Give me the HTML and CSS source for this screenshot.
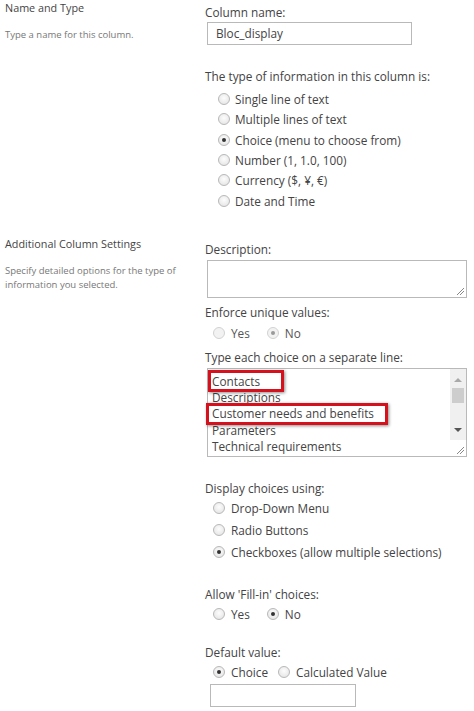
FILE: index.html
```html
<!DOCTYPE html>
<html>
<head>
<meta charset="utf-8">
<link rel="stylesheet" href="styles.css">
</head>
<body>
<div class="page">
  <section class="sec sec1">
    <div class="side">
      <div class="side-title">Name and Type</div>
      <div class="side-desc">Type a name for this column.</div>
    </div>
    <div class="main">
      <div class="lbl l-colname">Column name:</div>
      <div class="textbox tb-name">Bloc_display</div>
      <div class="lbl l-type">The type of information in this column is:</div>
      <div class="typelist">
        <div class="opt"><span class="radio"></span>Single line of text</div>
        <div class="opt"><span class="radio"></span>Multiple lines of text</div>
        <div class="opt"><span class="radio on"></span>Choice (menu to choose from)</div>
        <div class="opt"><span class="radio"></span>Number (1, 1.0, 100)</div>
        <div class="opt"><span class="radio"></span>Currency ($, ¥, €)</div>
        <div class="opt"><span class="radio"></span>Date and Time</div>
      </div>
    </div>
  </section>
  <section class="sec sec2">
    <div class="side">
      <div class="side-title">Additional Column Settings</div>
      <div class="side-desc">Specify detailed options for the type of information you selected.</div>
    </div>
    <div class="main">
      <div class="lbl l-desc">Description:</div>
      <div class="area area-desc"><span class="grip"></span></div>
      <div class="lbl l-unique">Enforce unique values:</div>
      <div class="inline in-unique disabled">
        <span class="radio dis"></span><span class="it">Yes</span>
        <span class="radio dis on"></span><span class="it">No</span>
      </div>
      <div class="lbl l-choices">Type each choice on a separate line:</div>
      <div class="area area-choices">
        <div class="lines">
          <div>Contacts</div>
          <div>Descriptions</div>
          <div>Customer needs and benefits</div>
          <div>Parameters</div>
          <div>Technical requirements</div>
        </div>
        <div class="sbar">
          <span class="arr up"></span>
          <span class="thumb"></span>
          <span class="arr down"></span>
          <span class="corner"><span class="grip"></span></span>
        </div>
        <span class="hl hl1"></span>
        <span class="hl hl2"></span>
      </div>
      <div class="lbl l-display">Display choices using:</div>
      <div class="displist">
        <div class="opt"><span class="radio"></span>Drop-Down Menu</div>
        <div class="opt"><span class="radio"></span>Radio Buttons</div>
        <div class="opt"><span class="radio on"></span>Checkboxes (allow multiple selections)</div>
      </div>
      <div class="lbl l-fill">Allow 'Fill-in' choices:</div>
      <div class="inline in-fill">
        <span class="radio"></span><span class="it">Yes</span>
        <span class="radio on"></span><span class="it">No</span>
      </div>
      <div class="lbl l-default">Default value:</div>
      <div class="inline in-default">
        <span class="radio on"></span><span class="it it-choice">Choice</span>
        <span class="radio"></span><span class="it">Calculated Value</span>
      </div>
      <div class="textbox tb-default"></div>
    </div>
  </section>
</div>
</body>
</html>
```

FILE: styles.css
```css
html, body {
  margin: 0;
  padding: 0;
  background: #fff;
}
body {
  font-family: "Open Sans", "Noto Sans", sans-serif;
  color: #444;
  width: 474px;
  height: 711px;
  overflow: hidden;
}
.page {
  display: flex;
  flex-direction: column;
}
.sec {
  display: grid;
  grid-template-columns: 205px 1fr;
}
.sec1 { height: 233px; }
.side {
  padding-left: 5px;
}
.side-title {
  font-size: 10.8px;
  line-height: 16px;
  color: #444;
}
.sec1 .side-title { margin-top: 0; }
.sec2 .side-title { margin-top: 3px; }
.side-desc {
  font-size: 9.5px;
  line-height: 14px;
  color: #777;
  margin-top: 12px;
  width: 190px;
}
.sec2 .side-desc { margin-top: 12px; }
.lbl {
  font-size: 11.8px;
  line-height: 16px;
  color: #444;
}
.l-colname { margin-top: 4px; }
.textbox {
  box-sizing: border-box;
  border: 1px solid #b9b9b9;
  background: #fff;
  font-size: 11.8px;
  line-height: 20px;
  padding-left: 8px;
  color: #444;
}
.tb-name {
  margin-top: 2px;
  margin-left: 2px;
  width: 205px;
  height: 23px;
}
.l-type { margin-top: 23px; }
.typelist {
  margin-top: 5px;
  padding-left: 13px;
}
.opt {
  display: flex;
  align-items: center;
  font-size: 11.8px;
  height: 20.3px;
  color: #444;
}
.radio {
  box-sizing: border-box;
  width: 12px;
  height: 12px;
  border-radius: 50%;
  border: 1px solid #b8b8b8;
  background: radial-gradient(circle at 50% 40%, #fdfdfd 0%, #e6e6e6 80%);
  margin-right: 5px;
  flex: none;
  position: relative;
  display: inline-block;
}
.radio.on::after {
  content: "";
  position: absolute;
  left: 3px;
  top: 3px;
  width: 4px;
  height: 4px;
  border-radius: 50%;
  background: #333;
}
.radio.dis {
  border-color: #d2d2d2;
  background: #f2f2f2;
}
.radio.dis.on::after { background: #9a9a9a; }

.l-desc { margin-top: 8px; }
.area {
  box-sizing: border-box;
  border: 1px solid #b9b9b9;
  background: #fff;
  margin-left: 2px;
  width: 260px;
  position: relative;
}
.area-desc {
  height: 38px;
  margin-top: 3px;
}
.grip {
  position: absolute;
  right: 2px;
  bottom: 2px;
  width: 7px;
  height: 7px;
  background: linear-gradient(135deg, transparent 0 45%, #888 45% 55%, transparent 55% 68%, #888 68% 78%, transparent 78%);
}
.l-unique { margin-top: 6px; }
.inline {
  display: flex;
  align-items: center;
  height: 22px;
  padding-left: 8px;
  font-size: 11.8px;
  color: #444;
}
.in-unique { margin-top: 2px; }
.in-fill { margin-top: 1px; }
.in-default { margin-top: 1px; }
.inline .radio { margin-right: 6px; }
.inline .it { margin-right: 17px; }
.inline .it-choice { margin-right: 10px; }
.disabled { color: #555; }
.l-choices { margin-top: 5px; }
.area-choices {
  height: 89px;
  margin-top: 3px;
  display: flex;
}
.lines {
  flex: 1;
  padding: 4px 0 0 4px;
  font-size: 11.8px;
  line-height: 16.2px;
  color: #444;
}
.sbar {
  width: 16px;
  background: #f0f0f0;
  display: flex;
  flex-direction: column;
  align-items: center;
  position: relative;
}
.arr {
  width: 0;
  height: 0;
  border-left: 4px solid transparent;
  border-right: 4px solid transparent;
}
.arr.up {
  border-bottom: 4px solid #a9a9a9;
  margin-top: 9px;
}
.thumb {
  width: 12px;
  height: 15px;
  background: #cdcdcd;
  margin-top: 6px;
}
.arr.down {
  border-top: 4px solid #555;
  margin-top: 25px;
}
.corner {
  position: absolute;
  left: 0;
  bottom: 0;
  width: 16px;
  height: 16px;
  background: #fff;
}
.hl {
  position: absolute;
  box-sizing: border-box;
  border: 3px solid #d4111d;
  box-shadow: 1px 1px 3px rgba(0,0,0,0.45);
}
.hl1 { left: 0; top: 1px; width: 76px; height: 22px; }
.hl2 { left: -2px; top: 34px; width: 182px; height: 22px; }

.l-display { margin-top: 23px; }
.displist {
  margin-top: 1px;
  padding-left: 8px;
}
.displist .opt { height: 22px; }
.displist .radio { margin-right: 6px; }
.l-fill { margin-top: 23px; }
.l-default { margin-top: 19px; }
.tb-default {
  margin-left: 5px;
  margin-top: 1px;
  width: 146px;
  height: 23px;
}
```
